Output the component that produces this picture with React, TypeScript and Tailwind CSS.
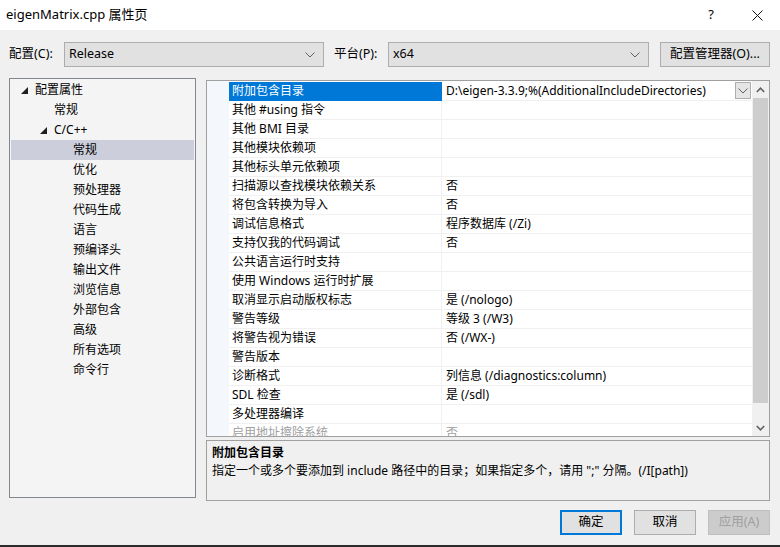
import React from 'react'

const font = { fontFamily: '"Noto Sans", "Noto Sans CJK SC", sans-serif' }

const rows: { name: string; value: string; dim?: boolean }[] = [
  { name: '附加包含目录', value: 'D:\\eigen-3.3.9;%(AdditionalIncludeDirectories)' },
  { name: '其他 #using 指令', value: '' },
  { name: '其他 BMI 目录', value: '' },
  { name: '其他模块依赖项', value: '' },
  { name: '其他标头单元依赖项', value: '' },
  { name: '扫描源以查找模块依赖关系', value: '否' },
  { name: '将包含转换为导入', value: '否' },
  { name: '调试信息格式', value: '程序数据库 (/Zi)' },
  { name: '支持仅我的代码调试', value: '否' },
  { name: '公共语言运行时支持', value: '' },
  { name: '使用 Windows 运行时扩展', value: '' },
  { name: '取消显示启动版权标志', value: '是 (/nologo)' },
  { name: '警告等级', value: '等级 3 (/W3)' },
  { name: '将警告视为错误', value: '否 (/WX-)' },
  { name: '警告版本', value: '' },
  { name: '诊断格式', value: '列信息 (/diagnostics:column)' },
  { name: 'SDL 检查', value: '是 (/sdl)' },
  { name: '多处理器编译', value: '' },
  { name: '启用地址擦除系统', value: '否', dim: true },
]

const tree: { label: string; indent: number; open?: boolean; selected?: boolean }[] = [
  { label: '配置属性', indent: 0, open: true },
  { label: '常规', indent: 1 },
  { label: 'C/C++', indent: 1, open: true },
  { label: '常规', indent: 2, selected: true },
  { label: '优化', indent: 2 },
  { label: '预处理器', indent: 2 },
  { label: '代码生成', indent: 2 },
  { label: '语言', indent: 2 },
  { label: '预编译头', indent: 2 },
  { label: '输出文件', indent: 2 },
  { label: '浏览信息', indent: 2 },
  { label: '外部包含', indent: 2 },
  { label: '高级', indent: 2 },
  { label: '所有选项', indent: 2 },
  { label: '命令行', indent: 2 },
]

function Chevron() {
  return (
    <svg width="10" height="6" viewBox="0 0 10 6">
      <polyline points="0.5,0.5 5,5 9.5,0.5" fill="none" stroke="#606060" strokeWidth="1" />
    </svg>
  )
}

function Triangle() {
  return (
    <svg width="7" height="7" viewBox="0 0 7 7">
      <polygon points="7,0 7,7 0,7" fill="#1e1e1e" />
    </svg>
  )
}

function Select({ value, width }: { value: string; width: string }) {
  return (
    <div className={`${width} h-[25px] bg-[#e1e1e1] border border-[#adadad] flex items-center justify-between pl-[4px] pr-[8px] text-[12.5px] text-black`}>
      <span>{value}</span>
      <Chevron />
    </div>
  )
}

export default function App() {
  return (
    <div className="w-[780px] h-[547px] bg-[#f0f0f0] flex flex-col overflow-hidden border-b-2 border-[#2b2b2b]" style={font}>
      {/* title bar */}
      <div className="h-[30px] bg-white flex items-center justify-between shrink-0">
        <span className="pl-[6px] text-[13px] text-black">eigenMatrix.cpp 属性页</span>
        <div className="flex items-center">
          <span className="w-[46px] text-center text-[13px] text-black">?</span>
          <span className="w-[46px] flex justify-center">
            <svg width="11" height="11" viewBox="0 0 11 11">
              <path d="M0.5 0.5 L10.5 10.5 M10.5 0.5 L0.5 10.5" stroke="#111" strokeWidth="1" />
            </svg>
          </span>
        </div>
      </div>

      {/* configuration row */}
      <div className="flex items-center h-[25px] mt-[12px] pl-[9px] pr-[10px] text-[12.5px] text-black">
        <span className="w-[55px]">配置(C):</span>
        <Select value="Release" width="w-[260px]" />
        <span className="ml-[10px] w-[54px]">平台(P):</span>
        <Select value="x64" width="w-[261px]" />
        <div className="ml-auto w-[110px] h-[25px] bg-[#e1e1e1] border border-[#adadad] flex items-center justify-center">
          配置管理器(O)...
        </div>
      </div>

      {/* main */}
      <div className="flex mt-[11px] pl-[9px] pr-[10px] gap-[10px]">
        {/* tree */}
        <div className="w-[187px] h-[420px] border border-[#828790] bg-[#f4f4f4] pt-[1px] px-[1px] text-[12px] text-black">
          {tree.map((t, i) => (
            <div
              key={i}
              className={`h-[20px] flex items-center ${t.selected ? 'bg-[#cccedb]' : ''}`}
              style={{ paddingLeft: 10 + t.indent * 19 }}
            >
              <span className="w-[14px] flex items-center">{t.open ? <Triangle /> : null}</span>
              <span>{t.label}</span>
            </div>
          ))}
        </div>

        {/* right column */}
        <div className="flex flex-col flex-1">
          <div className="h-[357px] mt-[2px] border border-[#a0a0a0] bg-white flex overflow-hidden">
            <div className="w-[22px] bg-[#f4f7fc] shrink-0" />
            <div className="flex-1 flex flex-col overflow-hidden pt-[1px]">
              {rows.map((r, i) => (
                <div key={i} className="h-[19px] flex shrink-0 text-[12px]">
                  <div
                    className={`w-[213px] shrink-0 flex items-center pl-[3px] border-b border-r ${
                      i === 0 ? 'bg-[#0078d7] text-white border-[#0078d7]' : 'border-[#f0f0f0]'
                    } ${r.dim ? 'text-[#a0a0a0]' : i === 0 ? '' : 'text-black'}`}
                  >
                    {r.name}
                  </div>
                  <div
                    className={`flex-1 flex items-center pl-[4px] border-b border-[#f0f0f0] relative ${
                      r.dim ? 'text-[#a0a0a0]' : 'text-black'
                    }`}
                  >
                    {r.value}
                    {i === 0 && (
                      <div className="absolute right-[1px] top-[0px] w-[16px] h-[17px] bg-[#e5e5e5] border border-[#adadad] flex items-center justify-center">
                        <Chevron />
                      </div>
                    )}
                  </div>
                </div>
              ))}
            </div>
            {/* scrollbar */}
            <div className="w-[17px] bg-[#f0f0f0] flex flex-col shrink-0">
              <div className="h-[17px] flex items-center justify-center">
                <svg width="9" height="6" viewBox="0 0 9 6">
                  <polyline points="0.8,5 4.5,1.2 8.2,5" fill="none" stroke="#606060" strokeWidth="1.6" />
                </svg>
              </div>
              <div className="mx-[1px] h-[305px] bg-[#cdcdcd]" />
              <div className="flex-1" />
              <div className="h-[17px] flex items-center justify-center">
                <svg width="9" height="6" viewBox="0 0 9 6">
                  <polyline points="0.8,1 4.5,4.8 8.2,1" fill="none" stroke="#606060" strokeWidth="1.6" />
                </svg>
              </div>
            </div>
          </div>

          <div className="h-[61px] mt-[3px] border border-[#a0a0a0] bg-[#f0f0f0] px-[5px] pt-[3px] text-[12px] text-black">
            <div className="font-bold leading-[18px]">附加包含目录</div>
            <div className="leading-[18px]">指定一个或多个要添加到 include 路径中的目录；如果指定多个，请用 ";" 分隔。(/I[path])</div>
          </div>
        </div>
      </div>

      {/* buttons */}
      <div className="flex justify-end gap-[12px] pr-[10px] mt-[9px] text-[12.5px]">
        <div className="w-[62px] h-[25px] bg-[#e1e1e1] border-2 border-[#0078d7] flex items-center justify-center text-black">确定</div>
        <div className="w-[62px] h-[25px] bg-[#e1e1e1] border border-[#adadad] flex items-center justify-center text-black">取消</div>
        <div className="w-[62px] h-[25px] bg-[#cccccc] border border-[#bfbfbf] flex items-center justify-center text-[#a0a0a0]">应用(A)</div>
      </div>
    </div>
  )
}
